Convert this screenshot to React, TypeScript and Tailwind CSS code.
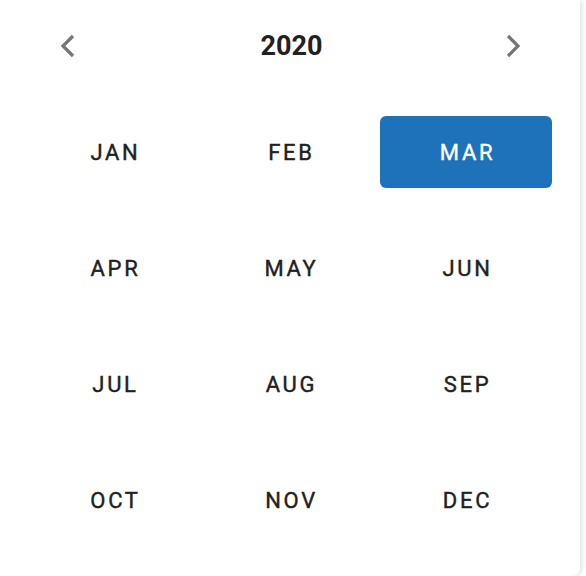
import React from "react";

const months = ["JAN","FEB","MAR","APR","MAY","JUN","JUL","AUG","SEP","OCT","NOV","DEC"];

function Chevron({ dir }: { dir: "left" | "right" }) {
  return (
    <svg width="16" height="24" viewBox="0 0 16 24" className="block">
      <path
        d={dir === "left" ? "M13 2 L3 12 L13 22" : "M3 2 L13 12 L3 22"}
        fill="none"
        stroke="#757575"
        strokeWidth="3.2"
      />
    </svg>
  );
}

export default function App() {
  return (
    <div className="w-[586px] h-[576px] bg-white overflow-hidden" style={{ fontFamily: "Roboto, 'Liberation Sans', sans-serif" }}>
      <div className="w-[580px] h-[576px] bg-white rounded-br-[8px] shadow-[2px_0_5px_rgba(0,0,0,0.12)] relative">
        <div className="flex items-center justify-between h-[92px] pl-[60px] pr-[59px]">
          <Chevron dir="left" />
          <div className="text-[27px] font-bold text-[#212121] leading-none pl-[2px]">2020</div>
          <Chevron dir="right" />
        </div>
        <div className="grid grid-cols-3 gap-x-[4px] gap-y-[44px] pl-[28px] pr-[28px] pt-[24px]">
          {months.map((m) => (
            <div
              key={m}
              className={
                "h-[72px] flex items-center justify-center rounded-[6px] text-[22px] font-normal tracking-[2.7px] pl-[3px] " +
                (m === "MAR" ? "bg-[#1e72ba] text-white" : "text-[#212121]")
              }
              style={{ WebkitTextStroke: m === "MAR" ? "0.35px white" : "0.4px #212121" }}
            >
              {m}
            </div>
          ))}
        </div>
      </div>
    </div>
  );
}
